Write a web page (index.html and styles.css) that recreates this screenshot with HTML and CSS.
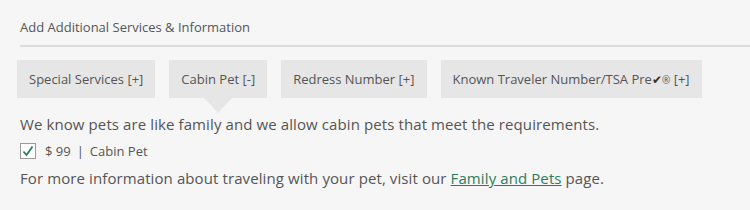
FILE: index.html
```html
<!DOCTYPE html>
<html lang="en">
<head>
    <meta charset="UTF-8">
    <meta name="viewport" content="width=device-width, initial-scale=1.0">
    <title>Additional Services</title>
    <link rel="stylesheet" href="styles.css">
</head>
<body>
    <div class="services">
        <h3 class="services-title">Add Additional Services &amp; Information</h3>

        <div class="tabs">
            <button type="button" class="tab">Special Services [+]</button>
            <button type="button" class="tab active">Cabin Pet [-]</button>
            <button type="button" class="tab">Redress Number [+]</button>
            <button type="button" class="tab">Known Traveler Number/TSA Pre<span class="tsa-check">&#10004;</span><span class="reg">&reg;</span> [+]</button>
        </div>

        <div class="panel">
            <p class="intro">We know pets are like family and we allow cabin pets that meet the requirements.</p>

            <label class="option">
                <span class="checkbox">
                    <svg width="14" height="14" viewBox="0 0 14 14">
                        <polyline points="2.5,7.5 5.5,11 11.5,2.5" fill="none" stroke="#2d7d5c" stroke-width="1.8" />
                    </svg>
                </span>
                <span class="price">$ 99</span>
                <span class="sep">|</span>
                <span>Cabin Pet</span>
            </label>

            <p class="more">For more information about traveling with your pet, visit our <a href="#">Family and Pets</a> page.</p>
        </div>
    </div>
</body>
</html>
```

FILE: styles.css
```css
:root {
    --text-color: #555555;
    --tab-bg: #e6e6e6;
    --line-color: #dcdcdc;
    --green: #2d7d5c;
}

body {
    margin: 0;
    background-color: #f6f6f6;
    color: var(--text-color);
    font-family: 'Open Sans', 'Liberation Sans', sans-serif;
}

.services {
    padding: 18px 0 0 20px;
}

.services-title {
    margin: 0;
    padding-bottom: 9px;
    font-size: 13px;
    font-weight: 400;
    line-height: 18px;
    border-bottom: 2px solid var(--line-color);
}

.tabs {
    display: flex;
    gap: 14px;
    margin: 13px 0 0 -3px;
}

.tab {
    position: relative;
    height: 38px;
    padding: 0 12px;
    border: none;
    background-color: var(--tab-bg);
    color: var(--text-color);
    font-family: inherit;
    font-size: 13px;
    cursor: pointer;
}

/* flechita debajo del tab activo */
.tab.active::after {
    content: "";
    position: absolute;
    left: 50%;
    top: 100%;
    margin-left: -14px;
    border-left: 14px solid transparent;
    border-right: 14px solid transparent;
    border-top: 15px solid var(--tab-bg);
}

.tsa-check {
    font-family: 'DejaVu Sans', sans-serif;
    font-size: 12px;
    color: #333;
}

.reg {
    font-size: 10px;
}

.panel {
    padding-top: 15px;
}

.intro,
.more {
    margin: 0;
    font-size: 15px;
    line-height: 22px;
    letter-spacing: 0.1px;
}

.option {
    display: flex;
    align-items: center;
    margin: 8px 0 8px 0;
    font-size: 13px;
    line-height: 16px;
}

.checkbox {
    display: flex;
    align-items: center;
    justify-content: center;
    width: 14px;
    height: 14px;
    margin-right: 9px;
    border: 1px solid #9a9a9a;
    background-color: #ffffff;
}

.sep {
    margin: 0 6px;
}

.more a {
    color: var(--green);
    text-decoration: underline;
}
```
